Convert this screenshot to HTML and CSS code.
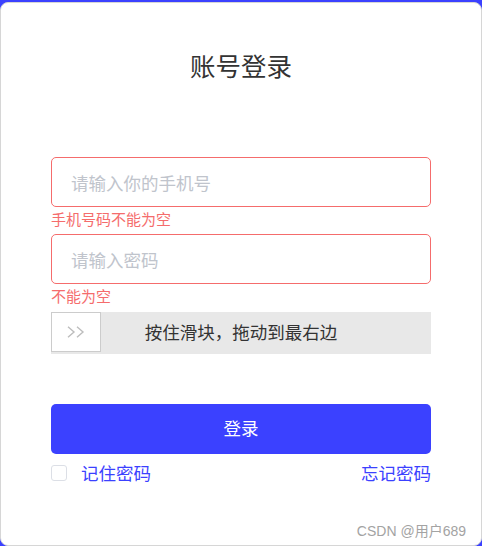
FILE: index.html
```html
<!DOCTYPE html>
<html lang="zh-CN">
<head>
<meta charset="utf-8">
<title>账号登录</title>
<link rel="stylesheet" href="styles.css">
</head>
<body>
<div class="card">
  <h1 class="title">账号登录</h1>
  <form class="form">
    <div class="field">
      <input class="input is-error" type="text" placeholder="请输入你的手机号">
      <div class="error">手机号码不能为空</div>
    </div>
    <div class="field">
      <input class="input is-error" type="password" placeholder="请输入密码">
      <div class="error">不能为空</div>
    </div>
    <div class="slider">
      <div class="handle">
        <svg width="18" height="12" viewBox="0 0 18 12"><polyline points="1,0.8 7,6 1,11.2" fill="none" stroke="#bdbdbd" stroke-width="1.4"/><polyline points="10,0.8 16,6 10,11.2" fill="none" stroke="#bdbdbd" stroke-width="1.4"/></svg>
      </div>
      <span class="slider-text">按住滑块，拖动到最右边</span>
    </div>
    <button class="btn" type="button">登录</button>
    <div class="options">
      <label class="remember"><span class="checkbox"></span><span>记住密码</span></label>
      <a class="forgot">忘记密码</a>
    </div>
  </form>
  <div class="watermark">CSDN @用户689</div>
</div>
</body>
</html>
```
FILE: styles.css
```css
html, body {
  margin: 0;
  padding: 0;
}
body {
  background: #3b41ff;
  font-family: "Noto Sans CJK SC", "Noto Sans", sans-serif;
  overflow: hidden;
}
.card {
  position: relative;
  box-sizing: border-box;
  width: 482px;
  height: 544px;
  margin-top: 2px;
  background: #fff;
  border: 1px solid #d6d6d6;
  border-radius: 8px;
  padding: 49px 50px 0;
}
.title {
  margin: 0;
  font-size: 25.5px;
  line-height: 26px;
  font-weight: 400;
  color: #333;
  text-align: center;
}
.form {
  margin-top: 79px;
  display: flex;
  flex-direction: column;
}
.field {
  display: flex;
  flex-direction: column;
}
.input {
  box-sizing: border-box;
  width: 380px;
  height: 50px;
  margin: 0;
  padding: 0 19px;
  border: 1px solid #dcdfe6;
  border-radius: 5px;
  font-family: inherit;
  font-size: 17.5px;
  color: #333;
  outline: none;
  background: #fff;
}
.input.is-error {
  border-color: #f56c6c;
}
.input::placeholder {
  color: #c0c4cc;
}
.error {
  height: 27px;
  font-size: 15px;
  line-height: 23px;
  color: #f56c6c;
}
.field + .field .error {
  height: 28px;
}
.slider {
  position: relative;
  height: 42px;
  background: #e8e8e8;
  display: flex;
  align-items: flex-start;
}
.handle {
  box-sizing: border-box;
  width: 50px;
  height: 40px;
  background: #fff;
  border: 1px solid #cccccc;
  display: flex;
  align-items: center;
  justify-content: center;
}
.slider-text {
  position: absolute;
  left: 0;
  right: 0;
  top: 0;
  line-height: 40px;
  text-align: center;
  font-size: 17.5px;
  color: #333;
}
.btn {
  margin-top: 50px;
  height: 50px;
  width: 380px;
  border: none;
  border-radius: 5px;
  background: #3b41ff;
  color: #fff;
  font-family: inherit;
  font-size: 17.5px;
  padding: 0 0 3px;
}
.options {
  margin-top: 9px;
  height: 20px;
  display: flex;
  justify-content: space-between;
  align-items: center;
  font-size: 17.5px;
  line-height: 20px;
  color: #3b41ff;
}
.remember {
  display: flex;
  align-items: center;
  gap: 14px;
}
.checkbox {
  box-sizing: border-box;
  width: 16px;
  height: 16px;
  border: 1px solid #dcdfe6;
  border-radius: 3px;
  background: #fff;
}
.forgot {
  color: #3b41ff;
}
.watermark {
  position: absolute;
  right: 15px;
  bottom: 6px;
  font-family: "Liberation Sans", "Noto Sans CJK SC", sans-serif;
  font-size: 14px;
  line-height: 16px;
  color: #a3a3a3;
}
```
